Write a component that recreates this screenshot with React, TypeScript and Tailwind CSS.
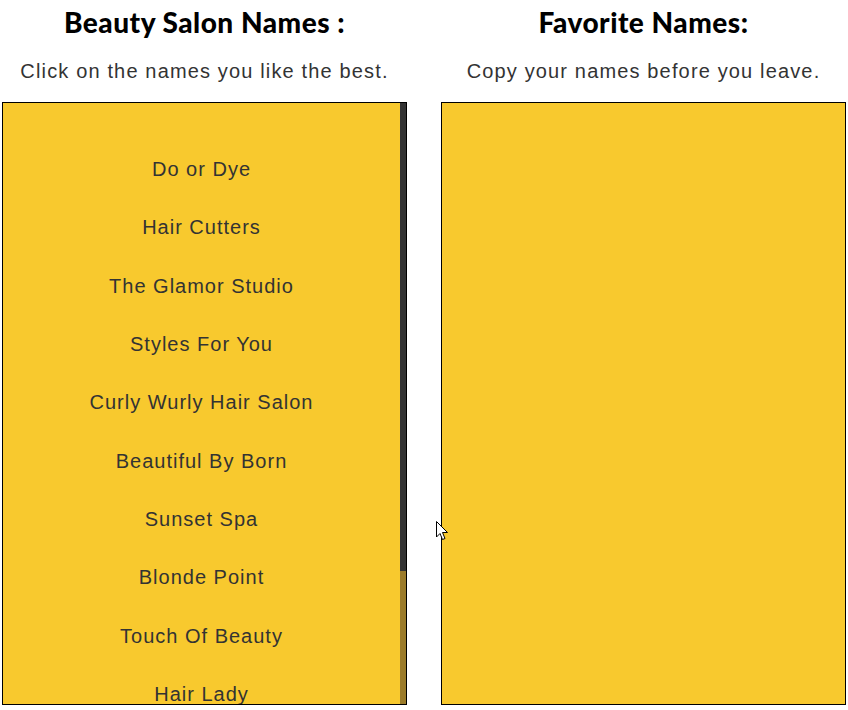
const names = [
  "Do or Dye",
  "Hair Cutters",
  "The Glamor Studio",
  "Styles For You",
  "Curly Wurly Hair Salon",
  "Beautiful By Born",
  "Sunset Spa",
  "Blonde Point",
  "Touch Of Beauty",
  "Hair Lady",
  "Shear Elegance",
  "Glam Corner",
];

function Cursor() {
  return (
    <svg className="absolute left-[436px] top-[521px] pointer-events-none" width="13" height="20" viewBox="0 0 13 20">
      <path d="M0.5 0.5 L0.5 16 L4 12.5 L6.5 18.5 L9 17.5 L6.5 11.5 L11.5 11.5 Z" fill="#fff" stroke="#000" strokeWidth="1" strokeLinejoin="round" />
    </svg>
  );
}

function Heading({ title, sub }: { title: string; sub: string }) {
  return (
    <>
      <h2 className="mt-[4px] h-[36px] text-[28px] font-black text-black font-['Lato',sans-serif] leading-[36px] tracking-[0.5px]">{title}</h2>
      <p className="mt-[19px] text-[20px] text-[#333] leading-[24px] tracking-[1.15px]">{sub}</p>
    </>
  );
}

export default function App() {
  return (
    <div className="relative w-[848px] h-[710px] bg-white overflow-hidden px-[2px] font-['Liberation_Sans',sans-serif]">
      <div className="flex gap-[34px]">
        <div className="w-[405px] flex flex-col items-center">
          <Heading title="Beauty Salon Names :" sub="Click on the names you like the best." />
          <div className="mt-[19px] w-full h-[603px] bg-[#f8c92e] border border-black flex">
            <div className="flex-1 overflow-hidden">
              <ul className="py-[37px]">
                {names.map((n) => (
                  <li key={n} className="h-[58.3px] flex items-center justify-center text-[20px] text-[#333] tracking-[1px] cursor-pointer">
                    {n}
                  </li>
                ))}
              </ul>
            </div>
            {/* scrollbar */}
            <div className="w-[6px] flex flex-col">
              <div className="h-[468px] bg-[#333]"></div>
              <div className="flex-1 bg-[#9b7b2a]"></div>
            </div>
          </div>
        </div>
        <div className="w-[405px] flex flex-col items-center">
          <Heading title="Favorite Names:" sub="Copy your names before you leave." />
          <div className="mt-[19px] w-full h-[603px] bg-[#f8c92e] border border-black"></div>
        </div>
      </div>
      <Cursor />
    </div>
  );
}
